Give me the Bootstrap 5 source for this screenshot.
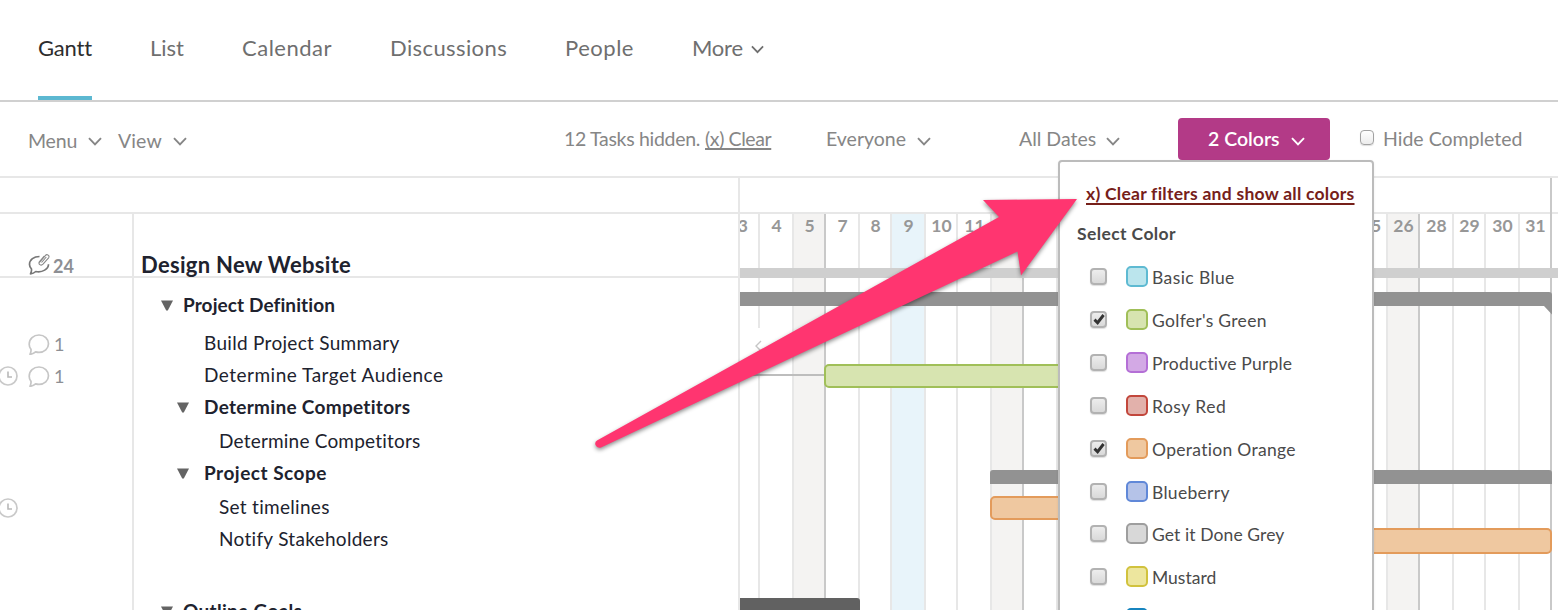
<!DOCTYPE html>
<html lang="en">
<head>
<meta charset="utf-8">
<title>Gantt</title>
<link href="https://cdn.jsdelivr.net/npm/bootstrap@5.3.0/dist/css/bootstrap.min.css" rel="stylesheet">
<style>
body{width:1558px;height:610px;overflow:hidden;background:#fff;font-family:Lato,"Open Sans",sans-serif;font-variant-ligatures:none;position:relative}
svg{display:block;flex:none}
/* tracking steps */
.k1{letter-spacing:.1px}.k2{letter-spacing:.2px}.k3{letter-spacing:.3px}.k4{letter-spacing:.4px}.k5{letter-spacing:.5px}
.k-2{letter-spacing:-.2px}.k-3{letter-spacing:-.31px}.k-4{letter-spacing:-.4px}
.top-tabs{height:102px;padding-left:38px;gap:58px;border-bottom:2px solid #d0d0d0}
.top-tabs a{display:flex;height:100px;padding-bottom:6px;align-items:center;font-size:22px;color:#6f6f6f;text-decoration:none;white-space:nowrap}
.top-tabs a.current{color:#2d2d2d;padding-bottom:2px;border-bottom:4px solid #5cb8d1;width:54px;letter-spacing:-.2px}
.tools{height:76px;padding-left:28px;border-bottom:2px solid #e7e7e7;font-size:19.5px;color:#868686;white-space:nowrap}
.tools>*{flex:none}
.tools u{text-decoration-thickness:2px;text-underline-offset:2px}
.w-menu{width:90px;padding-top:4px}.w-view{width:446px;padding-top:4px}.w-hidden{width:262px}.w-who{width:193px}.w-dates{width:159px}
.btn-colors{width:152px;height:42px;background:#b33a87;color:#fff;border-radius:4px;font-weight:600;padding-left:30px}
.cb{flex:none;display:flex;align-items:center;justify-content:center;width:17px;height:17px;border:2px solid #b2b2b2;border-radius:4px;background:linear-gradient(#ededed,#d9d9d9);box-shadow:0 1px 1px #0002}
.cb-hide{width:14px;height:15px;border:1.5px solid #a2a2a2;background:linear-gradient(#fff,#ececec);margin:-4px 9px 0 30px}
.side{width:738px;flex:none;height:432px}
.month{height:36px;border-bottom:2px solid #e7e7e7;flex:none}
.icons-col{width:134px;flex:none;border-right:2px solid #e7e7e7;color:#8d8f94;font-size:18px}
.headrow{height:64px;border-bottom:2px solid #e7e7e7}
.headrow.title{font-size:22px;font-weight:700;color:#20222e;padding-left:7px;line-height:22px}
.task{height:32px;display:flex;align-items:center;font-size:19px;color:#20222e;white-space:nowrap}
.task-icons{height:32px;display:flex;align-items:center}
.ind-a{padding-left:27px;gap:10px}.ind-b{padding-left:43px;gap:15px}.ind-c{padding-left:70px}.ind-d{padding-left:85px}
.gap-row{margin-top:2px}
.chart{width:820px;flex:none;height:432px;border-left:2px solid #e7e7e7;position:relative;overflow:hidden}
.days{height:396px}
.day{flex:none;width:34px;border-right:2px solid #e7e7e7;font-size:17.5px;font-weight:700;color:#979797;display:flex;justify-content:center;padding-left:1px;line-height:23px;overflow:hidden}
.day.first{width:20px;justify-content:flex-end;padding-right:10px}
.day.n{width:32px}.day.m{width:33px}
.day.off{background:#f4f3f2;border-right-color:#c9c9c9}
.day.now{background:#e8f4fa}
.month-end{left:810px;top:0;width:2px;height:36px;background:#c9c9c9}
.bar{position:absolute}
.sum{background:#929292;height:14px}
.taskbar{border:2px solid;border-radius:5px}
.green{background:#d7e4b0;border-color:#a0bf58}
.orange{background:#efc8a0;border-color:#e39b5b}
.menu-colors{position:absolute;left:1058px;top:160px;width:316px;height:460px;background:#fff;border:2px solid #bcbcbc;border-radius:4px;color:#4a4a4a;font-size:17.5px;white-space:nowrap;box-shadow:0 1px 3px #0001}
.clear-all{color:#76201a;font-weight:700;text-decoration:underline;text-decoration-thickness:2px;text-underline-offset:3px;padding-left:26px;height:24px;line-height:24px;margin-top:20px;letter-spacing:.26px}
.opt{height:22px;display:flex;align-items:center;padding-left:30px;margin-bottom:21px}
.opt.late{margin-bottom:20px}
.opt span:last-child:not(.sw){padding-top:5px}
.sw{width:22px;height:21px;border:2px solid;border-radius:5px;margin:0 4px 0 19px;flex:none}
.arrow{position:absolute;left:0;top:0;filter:drop-shadow(0 2px 2px rgba(0,0,0,.45))}
</style>
</head>
<body>
<svg width="0" height="0" class="position-absolute">
<symbol id="chev" viewBox="0 0 14 9"><path d="M1 1.2 7 7.4 13 1.2" fill="none" stroke="currentColor" stroke-width="1.9"/></symbol>
<symbol id="tri" viewBox="0 0 12 11"><path d="M0 .5H12L6.8 10.5H5.2Z" fill="#646464"/></symbol>
<symbol id="bubble" viewBox="0 0 22 22"><path d="M2 21.300C2.800 19.600 3.200 18 3 16.400 1.700 14.800 1.200 13.200 1.200 11.200 1.200 5.900 5.500 2 11 2S20.500 5.900 20.500 10.800 16.400 19.400 11 19.400C9.700 19.400 8.600 19.200 7.600 18.900 6.200 20.200 4.200 21.100 2 21.300Z" fill="none" stroke="#c6c6c6" stroke-width="1.7" stroke-linejoin="round"/></symbol>
<symbol id="clock" viewBox="0 0 20 20"><circle cx="9" cy="10" r="9" fill="none" stroke="#c9c9c9" stroke-width="1.700"/><path d="M9 5.500V11H13" fill="none" stroke="#b9b9b9" stroke-width="1.600"/></symbol>
<symbol id="check" viewBox="0 0 12 12"><path d="M1.500 6.600 4.600 9.700 10.600 2" fill="none" stroke="#333" stroke-width="2.900"/></symbol>
</svg>

<nav class="top-tabs d-flex">
<a class="current" href="#">Gantt</a>
<a href="#">List</a>
<a href="#" class="k5">Calendar</a>
<a href="#" class="k4">Discussions</a>
<a href="#" class="k5">People</a>
<a href="#"><span class="k-2">More</span><svg class="ms-2 mt-1" width="13" height="9"><use href="#chev"/></svg></a>
</nav>

<div class="tools d-flex align-items-center">
<div class="w-menu d-flex align-items-center"><span class="k-2">Menu</span><svg style="margin-left:11px" width="14" height="9"><use href="#chev"/></svg></div>
<div class="w-view d-flex align-items-center"><span class="k1">View</span><svg style="margin-left:11px" width="14" height="9"><use href="#chev"/></svg></div>
<div class="w-hidden"><span class="k-3">12 Tasks hidden.</span> <u class="k-4">(x) Clear</u></div>
<div class="w-who d-flex align-items-center">Everyone<svg class="mt-1" style="margin-left:11px" width="14" height="9"><use href="#chev"/></svg></div>
<div class="w-dates d-flex align-items-center">All Dates<svg class="mt-1" style="margin-left:10px" width="14" height="9"><use href="#chev"/></svg></div>
<div class="btn-colors d-flex align-items-center">2 Colors<svg class="mt-1" style="margin-left:11px" width="14" height="9"><use href="#chev"/></svg></div>
<span class="cb cb-hide"></span><span>Hide Completed</span>
</div>

<main class="d-flex">
<section class="side">
  <div class="month"></div>
  <div class="d-flex" style="height:396px">
    <div class="icons-col">
      <div class="headrow d-flex align-items-end fw-bold">
        <svg style="margin-left:28px" width="23" height="24" viewBox="0 0 23 24" fill="none" stroke-linejoin="round"><path d="M11.500 4.500C6 4.500 1.500 7.500 1.500 12.500 1.500 14.300 2.300 15.700 3.500 17 3.800 18.700 3.200 20.500 2.500 21.800 4.500 21.700 6.300 20.900 7.800 19.500 14.500 20.800 20.500 17 20.500 12.200" stroke="#777" stroke-width="1.700"/><path d="M11.500 10.500 17.500 3.400C19 1.700 22 3.700 20.600 5.800L15 12.200C13 14.300 9.700 12 11.500 9.600L16.200 4.100M13.500 10.500 18.300 5" stroke="#888" stroke-width="1.100"/></svg>
        <span class="lh-1" style="margin:0 0 1px 2px">24</span></div>
      <div class="task-icons" style="margin-top:50px"><svg style="margin-left:28px" width="22" height="22"><use href="#bubble"/></svg><span class="ms-1">1</span></div>
      <div class="task-icons"><svg style="margin-left:-1px" width="20" height="20"><use href="#clock"/></svg><svg style="margin-left:9px" width="22" height="22"><use href="#bubble"/></svg><span class="ms-1">1</span></div>
      <div class="task-icons" style="margin-top:100px"><svg style="margin-left:-1px" width="20" height="20"><use href="#clock"/></svg></div>
    </div>
    <div class="flex-grow-1">
      <div class="headrow title d-flex align-items-end"><span class="k3">Design New Website</span></div>
      <div class="task ind-a fw-bold" style="margin-top:11px"><svg width="12" height="11"><use href="#tri"/></svg><span class="k1">Project Definition</span></div>
      <div class="task ind-c k3" style="margin-top:6px">Build Project Summary</div>
      <div class="task ind-c k5">Determine Target Audience</div>
      <div class="task ind-b fw-bold"><svg width="12" height="11"><use href="#tri"/></svg><span class="k3">Determine Competitors</span></div>
      <div class="task ind-d gap-row k2">Determine Competitors</div>
      <div class="task ind-b fw-bold"><svg width="12" height="11"><use href="#tri"/></svg><span class="k5">Project Scope</span></div>
      <div class="task ind-d gap-row k3">Set timelines</div>
      <div class="task ind-d k3">Notify Stakeholders</div>
      <div class="task ind-a fw-bold" style="margin-top:40px"><svg width="12" height="11"><use href="#tri"/></svg><span class="k3">Outline Goals</span></div>
    </div>
  </div>
</section>

<section class="chart">
  <div class="month"></div>
  <div class="days d-flex">
    <div class="day first">3</div><div class="day">4</div><div class="day n off">5</div><div class="day">7</div><div class="day n">8</div><div class="day now">9</div><div class="day n">10</div><div class="day">11</div><div class="day n off"></div><div class="day"></div>
    <div class="day m"></div><div class="day m"></div><div class="day m"></div><div class="day m"></div><div class="day m off"></div><div class="day m"></div><div class="day m"></div><div class="day m"></div><div class="day m"></div><div class="day m">25</div>
    <div class="day n off">26</div><div class="day">28</div><div class="day n">29</div><div class="day">30</div><div class="day n" style="border-right-color:#c9c9c9">31</div>
  </div>
  <div class="bar month-end"></div>
  <div class="bar" style="left:0;top:90px;width:820px;height:10px;background:#cfcfcf"></div>
  <div class="bar sum" style="left:0;top:114px;width:812px;border-radius:0 3px 0 0"></div>
  <svg class="bar" style="left:804px;top:128px" width="8" height="9"><path d="M0 0H8V8.500Z" fill="#929292"/></svg>
  <div class="bar bg-white" style="left:0;top:150px;width:36px;height:36px"></div>
  <svg class="bar" style="left:15px;top:162px" width="8" height="12" fill="none" stroke="#c6c6c6" stroke-width="1.400"><path d="M6 1 1 6 6 11"/></svg>
  <div class="bar" style="left:0;top:196px;width:84px;height:2px;background:#bdbdbd"></div>
  <div class="bar taskbar green" style="left:84px;top:186px;width:260px;height:24px"></div>
  <div class="bar sum" style="left:250px;top:292px;width:562px;border-radius:3px 3px 0 0"></div>
  <div class="bar taskbar orange" style="left:250px;top:318px;width:120px;height:24px"></div>
  <div class="bar taskbar orange" style="left:560px;top:350px;width:252px;height:26px"></div>
  <div class="bar" style="left:0;top:420px;width:120px;height:14px;background:#616161;border-radius:0 3px 0 0"></div>
</section>
</main>

<div class="menu-colors">
  <div class="clear-all">x) Clear filters and show all colors</div>
  <div class="fw-bold k4" style="padding-left:17px;line-height:24px;margin:16px 0 19px">Select Color</div>
  <div class="opt"><span class="cb"></span><span class="sw" style="background:#bbe5ed;border-color:#5ebad2"></span><span class="k4">Basic Blue</span></div>
  <div class="opt"><span class="cb"><svg width="12" height="12"><use href="#check"/></svg></span><span class="sw" style="background:#d7e4b0;border-color:#a0bf58"></span><span class="k3">Golfer's Green</span></div>
  <div class="opt"><span class="cb"></span><span class="sw" style="background:#d3a9e5;border-color:#b46fd6"></span><span class="k2">Productive Purple</span></div>
  <div class="opt"><span class="cb"></span><span class="sw" style="background:#e2b1ab;border-color:#c2473c"></span><span class="k5">Rosy Red</span></div>
  <div class="opt"><span class="cb"><svg width="12" height="12"><use href="#check"/></svg></span><span class="sw" style="background:#efc8a0;border-color:#e39b5b"></span><span class="k3">Operation Orange</span></div>
  <div class="opt late"><span class="cb"></span><span class="sw" style="background:#b5c3e8;border-color:#6088d8"></span><span class="k3">Blueberry</span></div>
  <div class="opt"><span class="cb"></span><span class="sw" style="background:#d8d8d8;border-color:#9e9e9e"></span><span class="k1">Get it Done Grey</span></div>
  <div class="opt late"><span class="cb"></span><span class="sw" style="background:#ede69e;border-color:#d1c23d"></span><span>Mustard</span></div>
  <div class="opt"><span class="cb invisible"></span><span class="sw" style="background:#1684bf;border-color:#1684bf"></span></div>
</div>

<svg class="arrow" width="1558" height="610"><path d="M1077 199 983 200 999 217 597 440.500Q594.500 442 595.500 445 597 448.500 601 447.500L1017.500 251.500 1021 275.500Z" fill="#ff3570"/></svg>
<script src="https://cdn.jsdelivr.net/npm/bootstrap@5.3.0/dist/js/bootstrap.bundle.min.js"></script>
</body>
</html>
